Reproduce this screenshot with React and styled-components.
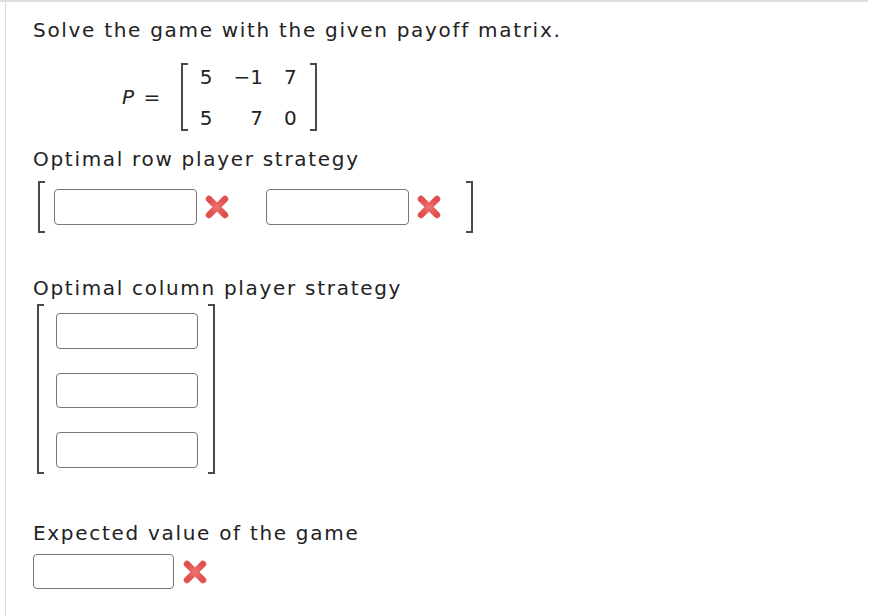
import React from 'react'
import styled, { createGlobalStyle } from 'styled-components'

const Global = createGlobalStyle`
body{
margin:0;
background:#fff;
font-family:"DejaVu Sans", Verdana, sans-serif;
color:#222;
}
`

const Frame = styled.div`
width:868px;
height:616px;
border-top:2px solid #dedede;
box-sizing:border-box;
`

const Panel = styled.div`
margin-left:5px;
height:100%;
border-left:1px solid #dcdcdc;
padding:16px 0 0 27px;
box-sizing:border-box;
`

const Text = styled.div`
font-size:20px;
line-height:24px;
letter-spacing:1.7px;
margin-top:${p => p.top || 0}px;
`

const MatrixRow = styled.div`
display:flex;
align-items:center;
margin-top:${p => p.top || 0}px;
margin-left:${p => p.left || 0}px;
gap:${p => p.gap || 0}px;
`

const Label = styled.span`
font-size:20px;
letter-spacing:1.5px;
margin-right:${p => p.space || 0}px;
i{ font-style:italic; }
`

const Bracket = styled.div`
width:7px;
height:${p => p.h}px;
border:2px solid #4a4a4a;
border-${p => (p.right ? 'left' : 'right')}:none;
box-sizing:border-box;
flex-shrink:0;
`

const Grid = styled.div`
display:grid;
grid-template-columns:repeat(3, auto);
column-gap:21px;
row-gap:17px;
padding:0 13px 0 12px;
font-size:20px;
line-height:24px;
span{ text-align:right; }
`

const Input = styled.div`
width:${p => p.w || 143}px;
height:${p => p.h || 36}px;
border:1px solid #777;
border-radius:4px;
box-sizing:border-box;
background:#fff;
`

const Column = styled.div`
display:flex;
flex-direction:column;
gap:24px;
padding:8px 10px 6px 12px;
`

const Wrong = () => (
  <svg width="24" height="24" viewBox="0 0 24 24">
    <defs>
      <radialGradient id="xg" cx="50%" cy="50%" r="60%">
        <stop offset="0%" stopColor="#ec7474" />
        <stop offset="100%" stopColor="#e24f4f" />
      </radialGradient>
    </defs>
    <path d="M4 4 L20 20 M20 4 L4 20" stroke="url(#xg)" strokeWidth="6.5" strokeLinecap="round" />
  </svg>
)

const App = () => {
  return (
    <Frame>
      <Global />
      <Panel>
        <Text>Solve the game with the given payoff matrix.</Text>

        <MatrixRow top={21} left={89}>
          <Label space={19}><i>P</i> =</Label>
          <Bracket h={68} />
          <Grid>
            <span>5</span><span>−1</span><span>7</span>
            <span>5</span><span>7</span><span>0</span>
          </Grid>
          <Bracket h={68} right />
        </MatrixRow>

        <Text top={16}>Optimal row player strategy</Text>

        <MatrixRow top={10} left={5}>
          <Bracket h={52} />
          <MatrixRow left={9} gap={8}>
            <Input />
            <Wrong />
          </MatrixRow>
          <MatrixRow left={37} gap={8}>
            <Input />
            <Wrong />
          </MatrixRow>
          <MatrixRow left={25}>
            <Bracket h={52} right />
          </MatrixRow>
        </MatrixRow>

        <Text top={43}>Optimal column player strategy</Text>

        <MatrixRow top={4} left={4}>
          <Bracket h={170} />
          <Column>
            <Input w={142} />
            <Input w={142} h={35} />
            <Input w={142} />
          </Column>
          <Bracket h={170} right />
        </MatrixRow>

        <Text top={47}>Expected value of the game</Text>

        <MatrixRow top={9} gap={9}>
          <Input w={141} h={35} />
          <Wrong />
        </MatrixRow>
      </Panel>
    </Frame>
  )
}

export default App
